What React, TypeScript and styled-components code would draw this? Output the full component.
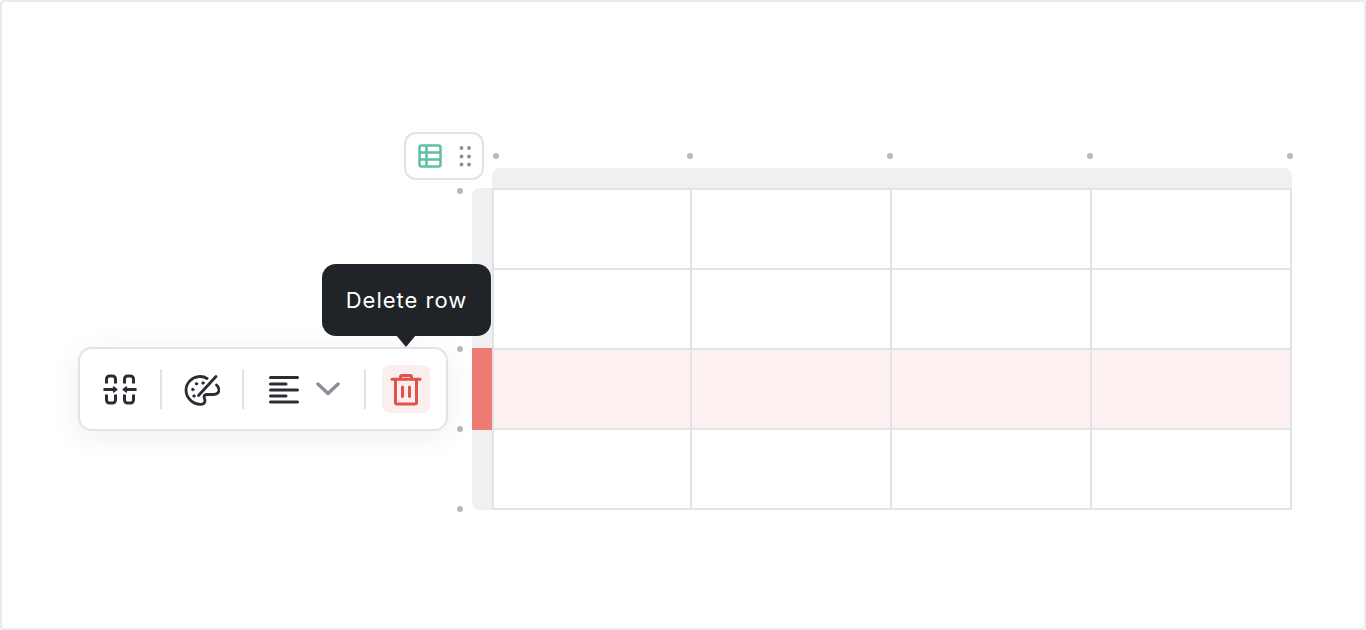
import styled, { createGlobalStyle } from 'styled-components';

const GlobalStyle = createGlobalStyle`
  html, body {
    margin: 0;
    padding: 0;
    background: #ffffff;
    font-family: Inter, "Liberation Sans", sans-serif;
  }
`;

const Frame = styled.div`
  box-sizing: border-box;
  width: 1366px;
  height: 630px;
  overflow: hidden;
  background: #ffffff;
  border: 2px solid #e9eaec;
  border-radius: 4px;
  padding: 166px 0 0 470px;
`;

const TableArea = styled.div`
  position: relative;
  display: grid;
  grid-template-columns: 20px 800px;
  grid-template-rows: 20px 322px;
  width: 820px;
`;

const TopRail = styled.div`
  grid-column: 2;
  grid-row: 1;
  background: #eff0f2;
  border-radius: 8px 8px 0 0;
`;

const LeftRail = styled.div`
  grid-column: 1;
  grid-row: 2;
  padding-top: 160px;
  background: #eff0f2;
  border-radius: 8px 0 0 8px;
  overflow: hidden;
`;

const RailMark = styled.div`
  height: 82px;
  background: #ee7b73;
`;

const Grid = styled.div`
  grid-column: 2;
  grid-row: 2;
  display: grid;
  grid-template-columns: 198px repeat(3, 200px);
  grid-auto-rows: 80px;
  border-top: 2px solid #e2e3e7;
  border-left: 2px solid #e2e3e7;
`;

const Cell = styled.div<{ $selected?: boolean }>`
  box-sizing: border-box;
  border-right: 2px solid #e2e3e7;
  border-bottom: 2px solid #e2e3e7;
  background: ${({ $selected }) => ($selected ? '#fcf0f0' : '#ffffff')};
`;

const Dot = styled.span<{ $x: number; $y: number }>`
  position: absolute;
  left: ${({ $x }) => $x - 3}px;
  top: ${({ $y }) => $y - 3}px;
  width: 6px;
  height: 6px;
  border-radius: 50%;
  background: #b6b9be;
`;

const Handle = styled.div`
  position: absolute;
  left: -68px;
  top: -36px;
  box-sizing: border-box;
  display: flex;
  align-items: center;
  gap: 16px;
  width: 80px;
  height: 48px;
  padding-left: 12px;
  background: #ffffff;
  border: 2px solid #e2e3e7;
  border-radius: 12px;
`;

const Toolbar = styled.div`
  position: absolute;
  left: -394px;
  top: 179px;
  box-sizing: border-box;
  display: flex;
  align-items: center;
  width: 370px;
  height: 84px;
  padding: 0 16px 0 22px;
  background: #ffffff;
  border: 2px solid #e2e3e7;
  border-radius: 14px;
  box-shadow: 0 6px 30px rgba(30, 34, 40, 0.07);
`;

const Divider = styled.div<{ $tight?: boolean }>`
  flex: none;
  width: 2px;
  height: 40px;
  margin: 0 ${({ $tight }) => ($tight ? 16 : 22)}px 0 ${({ $tight }) => ($tight ? 24 : 22)}px;
  background: #e2e3e7;
`;

const Chevron = styled.svg`
  flex: none;
  margin-left: 14px;
`;

const DangerButton = styled.div`
  display: flex;
  align-items: center;
  justify-content: center;
  width: 48px;
  height: 48px;
  background: #fbeeee;
  border-radius: 8px;
`;

const Tooltip = styled.div`
  position: absolute;
  left: 242px;
  top: -85px;
  box-sizing: border-box;
  width: 169px;
  height: 72px;
  display: flex;
  align-items: center;
  justify-content: center;
  background: #202327;
  border-radius: 14px;
  color: #ffffff;
  font-size: 22px;
  letter-spacing: 1px;
  white-space: nowrap;

  &::after {
    content: '';
    position: absolute;
    left: 74px;
    bottom: -11px;
    border-left: 10px solid transparent;
    border-right: 10px solid transparent;
    border-top: 12px solid #202327;
  }
`;

const UnlinkIcon = () => (
  <svg width="36" height="36" viewBox="0 0 36 36" fill="none" stroke="#2a2d33" strokeWidth="3" strokeLinejoin="round">
    <path d="M4.500 12.500V8a3 3 0 0 1 3-3h3a3 3 0 0 1 3 3v4.500" />
    <path d="M4.500 23.500V29a3 3 0 0 0 3 3h3a3 3 0 0 0 3-3v-5.500" />
    <path d="M22.500 12.500V8a3 3 0 0 1 3-3h3a3 3 0 0 1 3 3v4.500" />
    <path d="M22.500 23.500V29a3 3 0 0 0 3 3h3a3 3 0 0 0 3-3v-5.500" />
    <path d="M1.500 18.500H12" />
    <path d="M34.500 18.500H24" />
    <path d="M11.500 15.800L15 18.500 11.500 21.200Z" fill="#2a2d33" strokeWidth="1.200" />
    <path d="M24.500 15.800L21 18.500 24.500 21.200Z" fill="#2a2d33" strokeWidth="1.200" />
  </svg>
);

const PaletteIcon = () => (
  <svg width="36" height="36" viewBox="1 0 36 36" fill="none" stroke="#2a2d33" strokeWidth="2.800" strokeLinecap="round" strokeLinejoin="round">
    <path d="M24 7.500C21.500 5.800 18.800 5.200 15.500 5.600 8.500 6.500 3 12.300 3 19c0 7 5.700 14 14.500 14.300 2.700.1 4.500-1.300 4.500-3.500 0-1.500-.9-2.300-.9-3.600 0-1.700 1.300-2.700 3-2.700h6.400c3.200 0 5.800-2.100 5.500-5-.2-1.700-1-3.100-2.500-4.500" />
    <path d="M15.500 24.500L33 5.500" />
    <circle cx="9.800" cy="18.500" r="1.200" fill="#2a2d33" strokeWidth="1" />
    <circle cx="11" cy="25" r="1.200" fill="#2a2d33" strokeWidth="1" />
    <circle cx="13.500" cy="12.800" r="1.200" fill="#2a2d33" strokeWidth="1" />
    <circle cx="20" cy="12" r="1.200" fill="#2a2d33" strokeWidth="1" />
  </svg>
);

const AlignIcon = () => (
  <svg width="36" height="36" viewBox="0 0 36 36" fill="none" stroke="#2a2d33" strokeWidth="3" strokeLinecap="round">
    <path d="M4.500 6.500H31.500M4.500 13H20M4.500 19H31.500M4.500 25H20M4.500 31H31.500" />
  </svg>
);

const TrashIcon = () => (
  <svg width="36" height="36" viewBox="0 0 36 36" fill="none" stroke="#e0524a" strokeWidth="3" strokeLinecap="round" strokeLinejoin="round">
    <path d="M4 8.200H32" />
    <path d="M7.500 8.500V31.500a1.500 1.500 0 0 0 1.500 1.500H27a1.500 1.500 0 0 0 1.500-1.500V8.500" />
    <path d="M12.500 7V6a1.500 1.500 0 0 1 1.500-1.500h8a1.500 1.500 0 0 1 1.500 1.500v1" />
    <path d="M14.500 16V25.500M21.500 16V25.500" />
  </svg>
);

const TableIcon = () => (
  <svg width="24" height="24" viewBox="0 0 24 24" fill="none" stroke="#5fbfa5" strokeWidth="2.500">
    <rect x="1.500" y="1.500" width="21" height="21" rx="2" />
    <path d="M1.500 8.500H22.500M1.500 15.500H22.500M8.500 1.500V22.500" />
  </svg>
);

const GripIcon = () => (
  <svg width="16" height="24" viewBox="0 0 16 24" fill="#8c9199">
    {[4, 12.500, 20.500].flatMap((y) =>
      [3.500, 11].map((x) => <circle key={`${x}-${y}`} cx={x} cy={y} r="1.900" />),
    )}
  </svg>
);

const topDots = [24, 218, 418, 618, 818];
const leftDots = [23, 181, 261, 341];
const rows = [0, 1, 2, 3];
const cols = [0, 1, 2, 3];

export default function App() {
  return (
    <>
      <GlobalStyle />
      <Frame>
        <TableArea>
          <TopRail />
          <LeftRail>
            <RailMark />
          </LeftRail>
          <Grid>
            {rows.map((r) =>
              cols.map((c) => <Cell key={`${r}-${c}`} $selected={r === 2} />),
            )}
          </Grid>

          {topDots.map((x) => (
            <Dot key={x} $x={x} $y={-12} />
          ))}
          {leftDots.map((y) => (
            <Dot key={y} $x={-12} $y={y} />
          ))}

          <Handle>
            <TableIcon />
            <GripIcon />
          </Handle>

          <Toolbar>
            <UnlinkIcon />
            <Divider />
            <PaletteIcon />
            <Divider />
            <AlignIcon />
            <Chevron width="24" height="24" viewBox="0 0 24 24" fill="none" stroke="#8c9199" strokeWidth="3.400" strokeLinecap="round" strokeLinejoin="round">
              <path d="M2 7l10 9.500L22 7" />
            </Chevron>
            <Divider $tight />
            <DangerButton>
              <TrashIcon />
            </DangerButton>
            <Tooltip>Delete row</Tooltip>
          </Toolbar>
        </TableArea>
      </Frame>
    </>
  );
}
